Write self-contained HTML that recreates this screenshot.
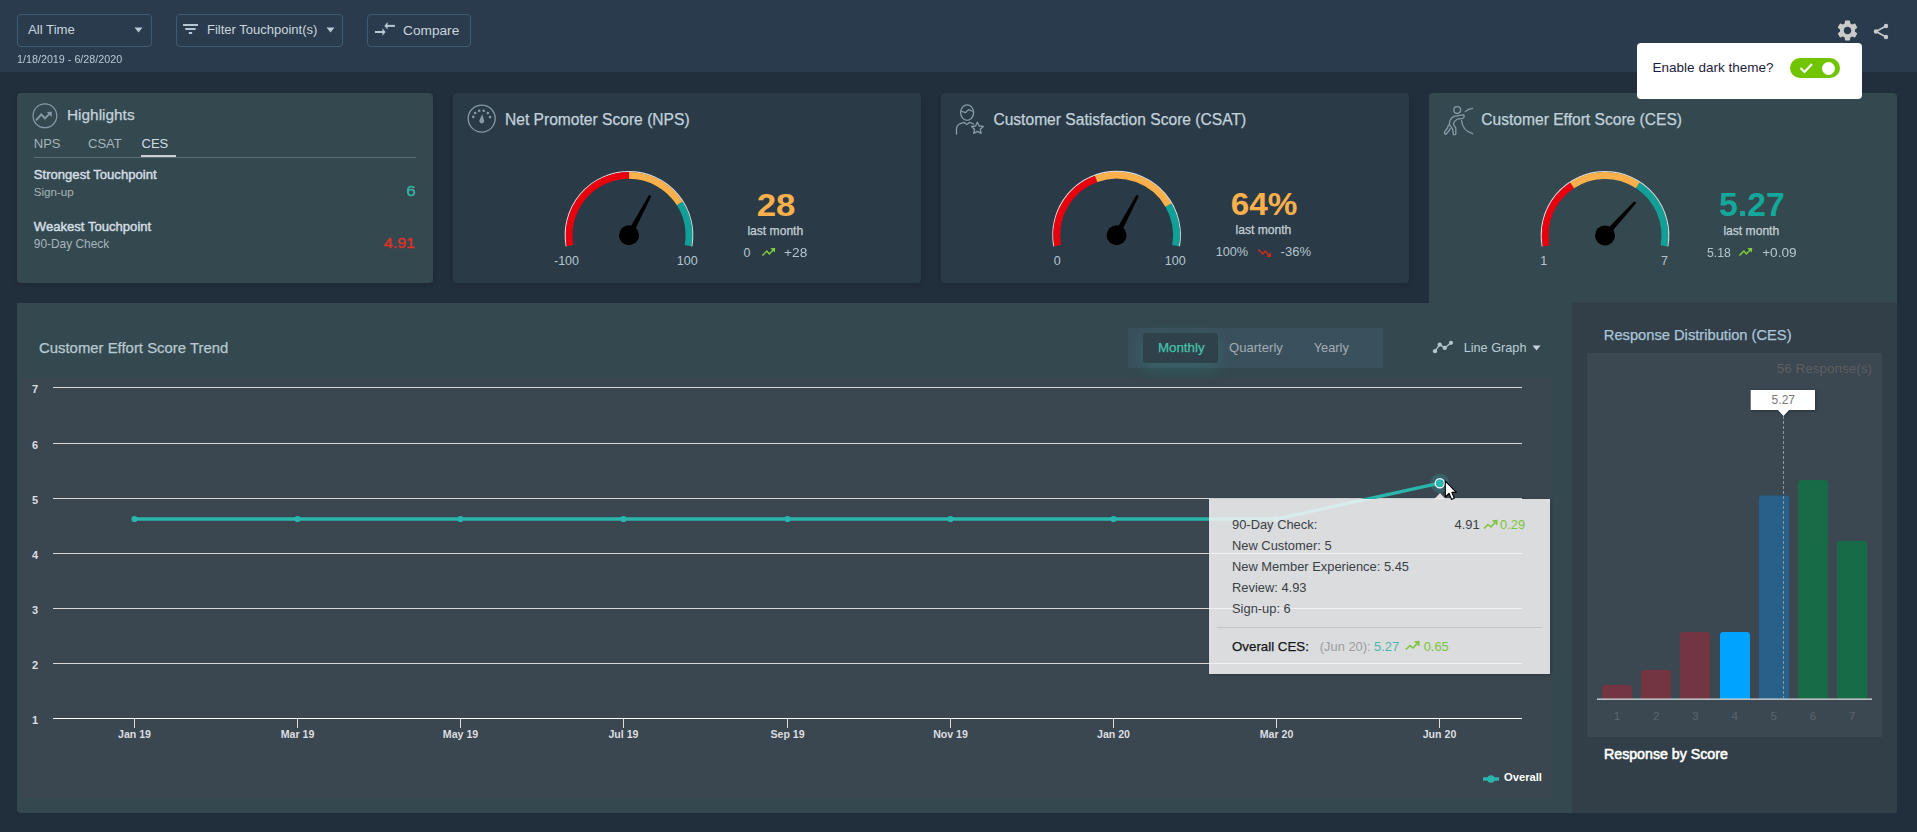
<!DOCTYPE html><html><head><meta charset="utf-8"><style>
html,body{margin:0;padding:0;}
body{width:1917px;height:832px;overflow:hidden;position:relative;background:#212e3b;font-family:"Liberation Sans",sans-serif;}
.t{position:absolute;line-height:1;white-space:nowrap;}
</style></head><body>
<div style="position:absolute;left:0px;top:0px;width:1917px;height:72px;background:#2a3b4d;"></div>
<div style="position:absolute;left:17px;top:14px;width:135px;height:33px;background:transparent;box-sizing:border-box;border:1px solid #3f5b73;border-radius:4px;"></div>
<div class="t" style="top:23.00px;font-size:13.2px;color:#c9d6de;font-weight:normal;left:28.00px;">All Time</div>
<svg style="position:absolute;left:134px;top:27px" width="10" height="6"><path d="M0.5,0.5 L8.5,0.5 L4.5,5.5Z" fill="#b7c9d3"/></svg>
<div class="t" style="top:55.00px;font-size:10px;color:#b8cad6;font-weight:normal;left:17.00px;transform-origin:0 0;transform: scaleX(1.075);">1/18/2019 - 6/28/2020</div>
<div style="position:absolute;left:176px;top:14px;width:167px;height:33px;background:transparent;box-sizing:border-box;border:1px solid #3f5b73;border-radius:4px;"></div>
<svg style="position:absolute;left:183px;top:24px" width="16" height="13"><g fill="#b3c8d2"><rect x="0" y="0" width="15" height="2"/><rect x="2.3" y="4" width="10.3" height="2"/><rect x="5.8" y="8" width="3.3" height="2"/></g></svg>
<div class="t" style="top:23.00px;font-size:13px;color:#c9d6de;font-weight:normal;left:207.00px;">Filter Touchpoint(s)</div>
<svg style="position:absolute;left:326px;top:27px" width="10" height="6"><path d="M0.5,0.5 L8.5,0.5 L4.5,5.5Z" fill="#b7c9d3"/></svg>
<div style="position:absolute;left:367px;top:14px;width:104px;height:33px;background:transparent;box-sizing:border-box;border:1px solid #3f5b73;border-radius:4px;"></div>
<svg style="position:absolute;left:370px;top:18px" width="28" height="22"><g fill="#b3c8d2"><rect x="4.9" y="13" width="8" height="2"/><path d="M12.4,10.2 L15.6,14 L12.4,17.7 Z"/><rect x="17.2" y="6.9" width="7.7" height="2"/><path d="M17.6,4 L14.3,7.9 L17.6,11.5 Z"/></g></svg>
<div class="t" style="top:24.00px;font-size:13.7px;color:#c9d6de;font-weight:normal;left:403.00px;">Compare</div>
<svg style="position:absolute;left:1834.7px;top:18.4px" width="25" height="25" viewBox="0 0 24 24"><path fill="#c9c9c9" d="M19.14,12.94c0.04-0.3,0.06-0.61,0.06-0.94c0-0.32-0.02-0.64-0.07-0.94l2.03-1.58c0.18-0.14,0.23-0.41,0.12-0.61 l-1.92-3.32c-0.12-0.22-0.37-0.29-0.59-0.22l-2.39,0.96c-0.5-0.38-1.03-0.7-1.62-0.94L14.4,2.81c-0.04-0.24-0.24-0.41-0.48-0.41 h-3.84c-0.24,0-0.43,0.17-0.47,0.41L9.25,5.35C8.66,5.59,8.12,5.92,7.63,6.29L5.24,5.33c-0.22-0.08-0.47,0-0.59,0.22L2.74,8.87 C2.62,9.08,2.66,9.34,2.86,9.48l2.03,1.58C4.84,11.36,4.8,11.69,4.8,12s0.02,0.64,0.07,0.94l-2.03,1.58 c-0.18,0.14-0.23,0.41-0.12,0.61l1.92,3.32c0.12,0.22,0.37,0.29,0.59,0.22l2.39-0.96c0.5,0.38,1.03,0.7,1.62,0.94l0.36,2.54 c0.05,0.24,0.24,0.41,0.48,0.41h3.84c0.24,0,0.44-0.17,0.47-0.41l0.36-2.54c0.59-0.24,1.13-0.56,1.62-0.94l2.39,0.96 c0.22,0.08,0.47,0,0.59-0.22l1.92-3.32c0.12-0.22,0.07-0.47-0.12-0.61L19.14,12.94z M12,15.6c-1.98,0-3.6-1.62-3.6-3.6 s1.62-3.6,3.6-3.6s3.6,1.62,3.6,3.6S13.98,15.6,12,15.6z"/></svg>
<svg style="position:absolute;left:1872px;top:22px" width="18" height="19" viewBox="0 0 18 19"><g fill="#c9c9c9" stroke="#c9c9c9"><circle cx="14" cy="4" r="2.2" stroke="none"/><circle cx="4" cy="9.5" r="2.2" stroke="none"/><circle cx="14" cy="15" r="2.2" stroke="none"/><path d="M14,4 L4,9.5 L14,15" fill="none" stroke-width="1.6"/></g></svg>
<div style="position:absolute;left:17px;top:93px;width:416px;height:190px;background:#33494f;border-radius:4px;box-shadow:0 2px 5px rgba(0,0,0,0.12);"></div>
<div style="position:absolute;left:453px;top:93px;width:468px;height:190px;background:#2a3b47;border-radius:4px;box-shadow:0 2px 5px rgba(0,0,0,0.12);"></div>
<div style="position:absolute;left:941px;top:93px;width:468px;height:190px;background:#2a3b47;border-radius:4px;box-shadow:0 2px 5px rgba(0,0,0,0.12);"></div>
<div style="position:absolute;left:1429px;top:93px;width:468px;height:230px;background:#33494f;border-radius:4px 4px 0 0;"></div>
<svg style="position:absolute;left:28px;top:100px" width="32" height="32" viewBox="0 0 32 32"><circle cx="16.9" cy="15.8" r="11.9" fill="none" stroke="#869ba7" stroke-width="1.2"/><polyline points="8.1,20.4 13.3,14.4 16.9,18.4 22,13.3" fill="none" stroke="#869ba7" stroke-width="1.9" stroke-linejoin="miter"/><path d="M23.8,11.8 L18.8,11.9 L23.7,16.9 Z" fill="#869ba7"/></svg>
<div class="t" style="top:107.00px;font-size:15.4px;color:#c5d3dc;font-weight:normal;left:67.00px;-webkit-text-stroke:0.25px currentColor;">Highlights</div>
<div class="t" style="top:137.00px;font-size:13px;color:#a5b3ba;font-weight:normal;left:33.80px;">NPS</div>
<div class="t" style="top:137.00px;font-size:13px;color:#a5b3ba;font-weight:normal;left:88.00px;">CSAT</div>
<div class="t" style="top:137.00px;font-size:13px;color:#d3dde2;font-weight:normal;left:141.50px;">CES</div>
<div style="position:absolute;left:34px;top:157px;width:382px;height:1px;background:#5d6e75;"></div>
<div style="position:absolute;left:141px;top:155px;width:35px;height:2px;background:#c5cdd1;"></div>
<div class="t" style="top:168.00px;font-size:13.1px;color:#d3dde2;font-weight:normal;left:33.80px;-webkit-text-stroke:0.45px currentColor;">Strongest Touchpoint</div>
<div class="t" style="top:186.00px;font-size:11.6px;color:#a9b5bb;font-weight:normal;left:33.80px;">Sign-up</div>
<div class="t" style="top:183.00px;font-size:15.4px;color:#3cb4a4;font-weight:normal;right:1501.40px;transform-origin:100% 0;transform: scaleX(1.1);-webkit-text-stroke:0.5px currentColor;">6</div>
<div class="t" style="top:220.00px;font-size:13.1px;color:#d3dde2;font-weight:normal;left:33.80px;-webkit-text-stroke:0.45px currentColor;">Weakest Touchpoint</div>
<div class="t" style="top:239.00px;font-size:11.9px;color:#a9b5bb;font-weight:normal;left:33.80px;">90-Day Check</div>
<div class="t" style="top:235.00px;font-size:15.2px;color:#e3322a;font-weight:normal;right:1501.40px;transform-origin:100% 0;transform: scaleX(1.06);-webkit-text-stroke:0.5px currentColor;">4.91</div>
<svg style="position:absolute;left:464px;top:100px" width="36" height="36" viewBox="0 0 36 36"><circle cx="17.7" cy="18.6" r="13.5" fill="none" stroke="#869ba7" stroke-width="1.3"/><g fill="#869ba7"><circle cx="9.3" cy="16.9" r="1.3"/><circle cx="11.2" cy="13" r="1.3"/><circle cx="15.2" cy="10.8" r="1.3"/><circle cx="19.7" cy="10.8" r="1.3"/><circle cx="23.8" cy="13" r="1.3"/><circle cx="26" cy="17.1" r="1.3"/><path d="M18.2,14.1 L20.1,20.4 A2.4,2.4 0 1 1 15.4,20.4 Z"/></g></svg>
<div class="t" style="top:112.00px;font-size:15.6px;color:#c2d2dc;font-weight:normal;left:505.00px;-webkit-text-stroke:0.25px currentColor;">Net Promoter Score (NPS)</div>
<svg style="position:absolute;left:0;top:0" width="1917" height="832" viewBox="0 0 1917 832"><path d="M566.27,246.36 A63.7,63.7 0 1 1 691.73,246.36" fill="none" stroke="#d5dadd" stroke-width="1.3"/><path d="M570.01,245.70 A59.9,59.9 0 0 1 629.00,175.40" fill="none" stroke="#e8000e" stroke-width="6.8"/><path d="M629.00,175.40 A59.9,59.9 0 0 1 679.80,203.56" fill="none" stroke="#fbb04b" stroke-width="6.8"/><path d="M679.80,203.56 A59.9,59.9 0 0 1 687.99,245.70" fill="none" stroke="#12a096" stroke-width="6.8"/><polygon points="626.44,233.94 648.98,194.96 650.13,195.57 651.27,196.18 631.56,236.66" fill="#000"/><circle cx="629" cy="235.3" r="10" fill="#000"/></svg>
<div class="t" style="top:255.00px;font-size:12.5px;color:#b5c5cf;font-weight:normal;left:566.50px;transform:translateX(-50%);">-100</div>
<div class="t" style="top:255.00px;font-size:12.5px;color:#b5c5cf;font-weight:normal;left:687.30px;transform:translateX(-50%);">100</div>
<div class="t" style="top:190.00px;font-size:31.8px;color:#fbb04b;font-weight:bold;left:775.50px;transform:translateX(-50%) scaleX(1.095);">28</div>
<div class="t" style="top:225.00px;font-size:12.1px;color:#c5d0d6;font-weight:normal;left:775.30px;transform:translateX(-50%);-webkit-text-stroke:0.25px currentColor;">last month</div>
<div class="t" style="top:247.00px;font-size:12.5px;color:#b5c5cf;font-weight:normal;left:743.60px;">0</div>
<svg style="position:absolute;left:760.80px;top:246.90px" width="16" height="11" viewBox="-1 -1 16 11"><g><polyline points="0.4,7.6 4.9,3.1 7.3,5.9 11.6,1.6" fill="none" stroke="#86cf3a" stroke-width="1.45"/><path d="M13.2,-0.1 L8.3,0.3 L12.8,4.6 Z" fill="#86cf3a"/></g></svg>
<div class="t" style="top:247.00px;font-size:12.5px;color:#b5c5cf;font-weight:normal;left:783.90px;transform-origin:0 0;transform: scaleX(1.1);">+28</div>
<svg style="position:absolute;left:950px;top:100px" width="40" height="40" viewBox="0 0 40 40"><g fill="none" stroke="#869ba7" stroke-width="1.3" stroke-linejoin="round" stroke-linecap="round"><ellipse cx="17.1" cy="12.6" rx="6.5" ry="7.7"/><polyline points="10.8,11 15.4,12.7 18.5,9.6 23.5,11.5"/><path d="M6.5,34.1 V28.4 Q6.8,24 13.9,22.4 L16.8,24.5 L19.7,22.4 L23.6,24"/><path d="M27.4,22.2 L29.2,26 L33.3,26.5 L30.3,29.3 L31.1,33.4 L27.4,31.4 L23.7,33.4 L24.5,29.3 L21.5,26.5 L25.6,26 Z"/></g></svg>
<div class="t" style="top:112.00px;font-size:15.6px;color:#c2d2dc;font-weight:normal;left:993.40px;-webkit-text-stroke:0.25px currentColor;">Customer Satisfaction Score (CSAT)</div>
<svg style="position:absolute;left:0;top:0" width="1917" height="832" viewBox="0 0 1917 832"><path d="M1053.87,246.26 A63.7,63.7 0 1 1 1179.33,246.26" fill="none" stroke="#d5dadd" stroke-width="1.3"/><path d="M1057.61,245.60 A59.9,59.9 0 0 1 1096.11,178.91" fill="none" stroke="#e8000e" stroke-width="6.8"/><path d="M1096.11,178.91 A59.9,59.9 0 0 1 1168.47,205.25" fill="none" stroke="#fbb04b" stroke-width="6.8"/><path d="M1168.47,205.25 A59.9,59.9 0 0 1 1175.59,245.60" fill="none" stroke="#12a096" stroke-width="6.8"/><polygon points="1114.04,233.84 1136.58,194.86 1137.73,195.47 1138.87,196.08 1119.16,236.56" fill="#000"/><circle cx="1116.6" cy="235.2" r="10" fill="#000"/></svg>
<div class="t" style="top:255.00px;font-size:12.5px;color:#b5c5cf;font-weight:normal;left:1057.30px;transform:translateX(-50%);">0</div>
<div class="t" style="top:255.00px;font-size:12.5px;color:#b5c5cf;font-weight:normal;left:1175.20px;transform:translateX(-50%);">100</div>
<div class="t" style="top:189.00px;font-size:31.8px;color:#fbb04b;font-weight:bold;left:1263.80px;transform:translateX(-50%) scaleX(1.047);">64%</div>
<div class="t" style="top:224.00px;font-size:12.1px;color:#c5d0d6;font-weight:normal;left:1263.40px;transform:translateX(-50%);-webkit-text-stroke:0.25px currentColor;">last month</div>
<div class="t" style="top:246.00px;font-size:12.7px;color:#b5c5cf;font-weight:normal;left:1215.70px;">100%</div>
<svg style="position:absolute;left:1256.90px;top:247.00px" width="16" height="11" viewBox="-1 -1 16 11"><g transform="translate(0,9) scale(1,-1)"><polyline points="0.4,7.6 4.9,3.1 7.3,5.9 11.6,1.6" fill="none" stroke="#d42a1e" stroke-width="1.45"/><path d="M13.2,-0.1 L8.3,0.3 L12.8,4.6 Z" fill="#d42a1e"/></g></svg>
<div class="t" style="top:245.00px;font-size:13px;color:#b5c5cf;font-weight:normal;left:1280.60px;">-36%</div>
<svg style="position:absolute;left:1438px;top:100px" width="40" height="40" viewBox="0 0 40 40"><g fill="none" stroke="#869ba7" stroke-width="1.3" stroke-linejoin="round" stroke-linecap="round"><circle cx="19.2" cy="10.1" r="3.4"/><path d="M27.4,11.5 Q30.5,9 34.6,8.4"/><path d="M23.6,20.7 Q24.5,30.5 34.6,33.7"/><path d="M15.9,16.3 L25,14.9 Q27.2,15.5 25.6,17.8 L24,18.7 L19.2,19.2 Q16.2,21 15.4,23.6 Q15.6,25.5 17.8,27.9 L17.8,34.6 L15.4,34.6 L14.4,28.4 Q11.6,26 11.5,24 Q11.5,21 12.2,20 Q13.5,17.5 15.9,16.3 Z"/><path d="M10.6,25 Q9.5,29 6.8,31.5 Q6,33.5 7.7,34.4 Q10.5,32 12.5,28.4"/></g></svg>
<div class="t" style="top:112.00px;font-size:15.6px;color:#c2d2dc;font-weight:normal;left:1481.30px;-webkit-text-stroke:0.25px currentColor;">Customer Effort Score (CES)</div>
<svg style="position:absolute;left:0;top:0" width="1917" height="832" viewBox="0 0 1917 832"><path d="M1542.27,246.46 A63.7,63.7 0 1 1 1667.73,246.46" fill="none" stroke="#d5dadd" stroke-width="1.3"/><path d="M1546.01,245.80 A59.9,59.9 0 0 1 1572.11,185.34" fill="none" stroke="#e8000e" stroke-width="6.8"/><path d="M1572.11,185.34 A59.9,59.9 0 0 1 1637.89,185.34" fill="none" stroke="#fbb04b" stroke-width="6.8"/><path d="M1637.89,185.34 A59.9,59.9 0 0 1 1663.99,245.80" fill="none" stroke="#12a096" stroke-width="6.8"/><polygon points="1602.86,233.45 1634.32,201.24 1635.29,202.12 1636.25,202.99 1607.14,237.35" fill="#000"/><circle cx="1605" cy="235.4" r="10" fill="#000"/></svg>
<div class="t" style="top:255.00px;font-size:12.5px;color:#b5c5cf;font-weight:normal;left:1543.70px;transform:translateX(-50%);">1</div>
<div class="t" style="top:255.00px;font-size:12.5px;color:#b5c5cf;font-weight:normal;left:1664.50px;transform:translateX(-50%);">7</div>
<div class="t" style="top:189.00px;font-size:32.8px;color:#13a89a;font-weight:bold;left:1751.80px;transform:translateX(-50%) scaleX(1.03);">5.27</div>
<div class="t" style="top:225.00px;font-size:12.1px;color:#c5d0d6;font-weight:normal;left:1751.30px;transform:translateX(-50%);-webkit-text-stroke:0.25px currentColor;">last month</div>
<div class="t" style="top:247.00px;font-size:12.5px;color:#b5c5cf;font-weight:normal;left:1706.80px;transform-origin:0 0;transform: scaleX(0.98);">5.18</div>
<svg style="position:absolute;left:1737.90px;top:247.00px" width="16" height="11" viewBox="-1 -1 16 11"><g><polyline points="0.4,7.6 4.9,3.1 7.3,5.9 11.6,1.6" fill="none" stroke="#86cf3a" stroke-width="1.45"/><path d="M13.2,-0.1 L8.3,0.3 L12.8,4.6 Z" fill="#86cf3a"/></g></svg>
<div class="t" style="top:247.00px;font-size:12.5px;color:#b5c5cf;font-weight:normal;right:120.80px;transform-origin:100% 0;transform: scaleX(1.09);">+0.09</div>
<div style="position:absolute;left:17px;top:303px;width:1880px;height:510px;background:#33494f;border-radius:0 0 4px 4px;"></div>
<div style="position:absolute;left:1572px;top:303px;width:325px;height:510px;background:#333f48;border-radius:0 0 4px 0;"></div>
<div class="t" style="top:341.00px;font-size:14.9px;color:#b8c8d0;font-weight:normal;left:39.00px;-webkit-text-stroke:0.25px currentColor;">Customer Effort Score Trend</div>
<div style="position:absolute;left:21px;top:378px;width:1531px;height:420px;background:#3a4650;"></div>
<svg style="position:absolute;left:0;top:0" width="1917" height="832" viewBox="0 0 1917 832"><rect x="53" y="387" width="1469" height="1" fill="#d8d8d8"/><rect x="53" y="443" width="1469" height="1" fill="#d8d8d8"/><rect x="53" y="498" width="1469" height="1" fill="#d8d8d8"/><rect x="53" y="553" width="1469" height="1" fill="#d8d8d8"/><rect x="53" y="608" width="1469" height="1" fill="#d8d8d8"/><rect x="53" y="663" width="1469" height="1" fill="#d8d8d8"/><rect x="53" y="718" width="1469" height="1" fill="#ffffff"/><rect x="134" y="719" width="1" height="9" fill="#dcdcdc"/><rect x="297" y="719" width="1" height="9" fill="#dcdcdc"/><rect x="460" y="719" width="1" height="9" fill="#dcdcdc"/><rect x="623" y="719" width="1" height="9" fill="#dcdcdc"/><rect x="787" y="719" width="1" height="9" fill="#dcdcdc"/><rect x="950" y="719" width="1" height="9" fill="#dcdcdc"/><rect x="1113" y="719" width="1" height="9" fill="#dcdcdc"/><rect x="1276" y="719" width="1" height="9" fill="#dcdcdc"/><rect x="1439" y="719" width="1" height="9" fill="#dcdcdc"/><polyline points="134.5,519 1276.5,519 1439.8,483.2" fill="none" stroke="#2ab5ad" stroke-width="3.4" stroke-linejoin="round"/><circle cx="134.5" cy="519" r="3.1" fill="#2ab5ad"/><circle cx="297.5" cy="519" r="3.1" fill="#2ab5ad"/><circle cx="460.5" cy="519" r="3.1" fill="#2ab5ad"/><circle cx="623.5" cy="519" r="3.1" fill="#2ab5ad"/><circle cx="787.5" cy="519" r="3.1" fill="#2ab5ad"/><circle cx="950.5" cy="519" r="3.1" fill="#2ab5ad"/><circle cx="1113.5" cy="519" r="3.1" fill="#2ab5ad"/><circle cx="1276.5" cy="519" r="3.1" fill="#2ab5ad"/><circle cx="1439.8" cy="483.2" r="9.5" fill="#2ab5ad" fill-opacity="0.25"/><circle cx="1439.8" cy="483.2" r="4.6" fill="#2ab5ad" stroke="#ffffff" stroke-width="1.2"/></svg>
<div class="t" style="top:384.00px;font-size:11px;color:#dcdee0;font-weight:bold;left:35.00px;transform:translateX(-50%);">7</div>
<div class="t" style="top:440.00px;font-size:11px;color:#dcdee0;font-weight:bold;left:35.00px;transform:translateX(-50%);">6</div>
<div class="t" style="top:495.00px;font-size:11px;color:#dcdee0;font-weight:bold;left:35.00px;transform:translateX(-50%);">5</div>
<div class="t" style="top:550.00px;font-size:11px;color:#dcdee0;font-weight:bold;left:35.00px;transform:translateX(-50%);">4</div>
<div class="t" style="top:605.00px;font-size:11px;color:#dcdee0;font-weight:bold;left:35.00px;transform:translateX(-50%);">3</div>
<div class="t" style="top:660.00px;font-size:11px;color:#dcdee0;font-weight:bold;left:35.00px;transform:translateX(-50%);">2</div>
<div class="t" style="top:715.00px;font-size:11px;color:#dcdee0;font-weight:bold;left:35.00px;transform:translateX(-50%);">1</div>
<div class="t" style="top:729.00px;font-size:10.6px;color:#dcdee0;font-weight:bold;left:134.50px;transform:translateX(-50%);">Jan 19</div>
<div class="t" style="top:729.00px;font-size:10.6px;color:#dcdee0;font-weight:bold;left:297.50px;transform:translateX(-50%);">Mar 19</div>
<div class="t" style="top:729.00px;font-size:10.6px;color:#dcdee0;font-weight:bold;left:460.50px;transform:translateX(-50%);">May 19</div>
<div class="t" style="top:729.00px;font-size:10.6px;color:#dcdee0;font-weight:bold;left:623.50px;transform:translateX(-50%);">Jul 19</div>
<div class="t" style="top:729.00px;font-size:10.6px;color:#dcdee0;font-weight:bold;left:787.50px;transform:translateX(-50%);">Sep 19</div>
<div class="t" style="top:729.00px;font-size:10.6px;color:#dcdee0;font-weight:bold;left:950.50px;transform:translateX(-50%);">Nov 19</div>
<div class="t" style="top:729.00px;font-size:10.6px;color:#dcdee0;font-weight:bold;left:1113.50px;transform:translateX(-50%);">Jan 20</div>
<div class="t" style="top:729.00px;font-size:10.6px;color:#dcdee0;font-weight:bold;left:1276.50px;transform:translateX(-50%);">Mar 20</div>
<div class="t" style="top:729.00px;font-size:10.6px;color:#dcdee0;font-weight:bold;left:1439.50px;transform:translateX(-50%);">Jun 20</div>
<svg style="position:absolute;left:1480px;top:772px" width="22" height="14"><rect x="3" y="5.3" width="16" height="3.4" fill="#2ab5ad"/><circle cx="11" cy="7" r="3.8" fill="#2ab5ad"/></svg>
<div class="t" style="top:772.00px;font-size:11.2px;color:#ffffff;font-weight:bold;left:1504.00px;">Overall</div>
<div style="position:absolute;left:1128px;top:328px;width:255px;height:40px;background:#3a505c;"></div>
<div style="position:absolute;left:1143px;top:333px;width:75px;height:30px;background:#2f424c;border-radius:3px;box-shadow:0 5px 16px rgba(50,150,140,0.32);"></div>
<div class="t" style="top:341.00px;font-size:13.3px;color:#46c1a9;font-weight:normal;left:1158.00px;-webkit-text-stroke:0.25px currentColor;">Monthly</div>
<div class="t" style="top:341.00px;font-size:13.1px;color:#a2adb3;font-weight:normal;left:1229.00px;">Quarterly</div>
<div class="t" style="top:342.00px;font-size:12.8px;color:#a2adb3;font-weight:normal;left:1313.70px;">Yearly</div>
<svg style="position:absolute;left:1431px;top:338px" width="24" height="17"><g fill="#b5c8d0"><circle cx="4" cy="13.2" r="2.1"/><circle cx="8.7" cy="6.6" r="2.1"/><circle cx="13.8" cy="9.9" r="2.1"/><circle cx="20" cy="4.8" r="2.1"/></g><polyline points="4,13.2 8.7,6.6 13.8,9.9 20,4.8" fill="none" stroke="#b5c8d0" stroke-width="1.3"/></svg>
<div class="t" style="top:342.00px;font-size:12.7px;color:#bccdd6;font-weight:normal;left:1463.70px;">Line Graph</div>
<svg style="position:absolute;left:1532px;top:345px" width="10" height="6"><path d="M0.5,0.5 L8.5,0.5 L4.5,5.5Z" fill="#c8d4da"/></svg>
<div style="position:absolute;left:1209px;top:499px;width:341px;height:175px;background:rgba(245,245,245,0.86);box-shadow:1px 1px 3px rgba(0,0,0,0.25);"></div>
<svg style="position:absolute;left:1432px;top:490px" width="16" height="10"><path d="M2.3,9 L8,3 L13.7,9Z" fill="rgba(245,245,245,0.86)"/></svg>
<div class="t" style="top:519.00px;font-size:12.9px;color:#3b4046;font-weight:normal;left:1232.00px;">90-Day Check:</div>
<div class="t" style="top:519.00px;font-size:12.9px;color:#3b4046;font-weight:normal;right:437.30px;">4.91</div>
<svg style="position:absolute;left:1483px;top:519px" width="15" height="11"><polyline points="1,9.5 5,5.5 8,8 13,2.5" fill="none" stroke="#7cc43a" stroke-width="1.6"/><path d="M9.5,2 L13.8,1.7 L13.5,6" fill="none" stroke="#7cc43a" stroke-width="1.6"/></svg>
<div class="t" style="top:519.00px;font-size:12.9px;color:#7cc43a;font-weight:normal;left:1500.00px;">0.29</div>
<div class="t" style="top:540.00px;font-size:12.9px;color:#3b4046;font-weight:normal;left:1232.00px;">New Customer: 5</div>
<div class="t" style="top:561.00px;font-size:12.9px;color:#3b4046;font-weight:normal;left:1232.00px;">New Member Experience: 5.45</div>
<div class="t" style="top:582.00px;font-size:12.9px;color:#3b4046;font-weight:normal;left:1232.00px;">Review: 4.93</div>
<div class="t" style="top:603.00px;font-size:12.9px;color:#3b4046;font-weight:normal;left:1232.00px;">Sign-up: 6</div>
<div style="position:absolute;left:1217px;top:627px;width:325px;height:1px;background:#c2c4c6;"></div>
<div class="t" style="top:640.00px;font-size:13.3px;color:#16181a;font-weight:normal;left:1232.00px;-webkit-text-stroke:0.25px currentColor;">Overall CES:</div>
<div class="t" style="top:641.00px;font-size:12.9px;color:#9a9c9e;font-weight:normal;left:1319.80px;">(Jun 20):</div>
<div class="t" style="top:641.00px;font-size:12.9px;color:#4ab5ac;font-weight:normal;left:1374.00px;">5.27</div>
<svg style="position:absolute;left:1405px;top:640px" width="15" height="11"><polyline points="1,9.5 5,5.5 8,8 13,2.5" fill="none" stroke="#7cc43a" stroke-width="1.6"/><path d="M9.5,2 L13.8,1.7 L13.5,6" fill="none" stroke="#7cc43a" stroke-width="1.6"/></svg>
<div class="t" style="top:641.00px;font-size:12.9px;color:#7cc43a;font-weight:normal;left:1423.70px;">0.65</div>
<svg style="position:absolute;left:1444px;top:480px" width="15" height="22"><path d="M1.3,1.2 L1.3,17 L5,13.3 L7.6,19.5 L10.3,18.3 L7.8,12.4 L12.3,12.4 Z" fill="#fff" stroke="#000" stroke-width="1.1" stroke-linejoin="round"/></svg>
<div class="t" style="top:328.00px;font-size:14.7px;color:#a9c5d8;font-weight:normal;left:1603.80px;-webkit-text-stroke:0.25px currentColor;">Response Distribution (CES)</div>
<div style="position:absolute;left:1587px;top:353px;width:295px;height:384px;background:#3b4751;"></div>
<div class="t" style="top:362.00px;font-size:13.5px;color:#5f5e5e;font-weight:normal;right:45.00px;">56 Response(s)</div>
<svg style="position:absolute;left:0;top:0" width="1917" height="832" viewBox="0 0 1917 832"><path d="M1602,699 V688 Q1602,685 1605,685 H1629 Q1632,685 1632,688 V699 Z" fill="#733640"/><path d="M1641,699 V673 Q1641,670 1644,670 H1668 Q1671,670 1671,673 V699 Z" fill="#733640"/><path d="M1680,699 V635 Q1680,632 1683,632 H1707 Q1710,632 1710,635 V699 Z" fill="#733640"/><path d="M1720,699 V635 Q1720,632 1723,632 H1747 Q1750,632 1750,635 V699 Z" fill="#00a3ff"/><path d="M1759,699 V498.4 Q1759,495.4 1762,495.4 H1786 Q1789,495.4 1789,498.4 V699 Z" fill="#27618a"/><path d="M1798,699 V483 Q1798,480 1801,480 H1825 Q1828,480 1828,483 V699 Z" fill="#186b47"/><path d="M1837,699 V544 Q1837,541 1840,541 H1864 Q1867,541 1867,544 V699 Z" fill="#186b47"/><rect x="1597" y="698.5" width="275" height="1.3" fill="#d8dcde"/><line x1="1783.5" y1="416" x2="1783.5" y2="698" stroke="#8f989d" stroke-width="1" stroke-dasharray="3,2"/><path d="M1750.7,390 H1815 V410 H1789 L1783.5,416 L1778,410 H1750.7 Z" fill="#ffffff" style="filter:drop-shadow(1px 1px 1.5px rgba(0,0,0,0.3))"/></svg>
<div class="t" style="top:394.00px;font-size:12px;color:#777777;font-weight:normal;left:1783.30px;transform:translateX(-50%);">5.27</div>
<div class="t" style="top:711.00px;font-size:11.5px;color:#58636b;font-weight:normal;left:1617.00px;transform:translateX(-50%);-webkit-text-stroke:0.2px currentColor;">1</div>
<div class="t" style="top:711.00px;font-size:11.5px;color:#58636b;font-weight:normal;left:1656.20px;transform:translateX(-50%);-webkit-text-stroke:0.2px currentColor;">2</div>
<div class="t" style="top:711.00px;font-size:11.5px;color:#58636b;font-weight:normal;left:1695.40px;transform:translateX(-50%);-webkit-text-stroke:0.2px currentColor;">3</div>
<div class="t" style="top:711.00px;font-size:11.5px;color:#58636b;font-weight:normal;left:1734.60px;transform:translateX(-50%);-webkit-text-stroke:0.2px currentColor;">4</div>
<div class="t" style="top:711.00px;font-size:11.5px;color:#58636b;font-weight:normal;left:1773.80px;transform:translateX(-50%);-webkit-text-stroke:0.2px currentColor;">5</div>
<div class="t" style="top:711.00px;font-size:11.5px;color:#58636b;font-weight:normal;left:1813.00px;transform:translateX(-50%);-webkit-text-stroke:0.2px currentColor;">6</div>
<div class="t" style="top:711.00px;font-size:11.5px;color:#58636b;font-weight:normal;left:1852.20px;transform:translateX(-50%);-webkit-text-stroke:0.2px currentColor;">7</div>
<div class="t" style="top:747.00px;font-size:14.2px;color:#ffffff;font-weight:normal;left:1604.00px;-webkit-text-stroke:0.55px currentColor;">Response by Score</div>
<div style="position:absolute;left:1637px;top:43px;width:225px;height:56px;background:#ffffff;border-radius:4px;"></div>
<div class="t" style="top:61.00px;font-size:13.5px;color:#1c1c3c;font-weight:normal;left:1652.60px;">Enable dark theme?</div>
<div style="position:absolute;left:1790px;top:58px;width:50px;height:20px;background:#70c500;border-radius:10px;"></div>
<svg style="position:absolute;left:1798px;top:61px" width="18" height="14"><path d="M2.5,7 L6.5,11 L14,3" fill="none" stroke="#fff" stroke-width="2.2"/></svg>
<div style="position:absolute;left:1822px;top:61.5px;width:13px;height:13px;border-radius:50%;background:#fff;"></div>
</body></html>
